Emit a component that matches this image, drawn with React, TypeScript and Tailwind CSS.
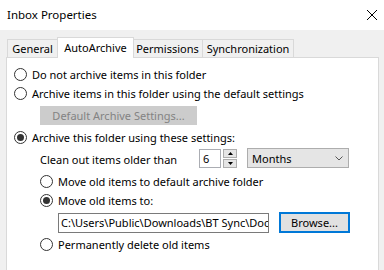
import React from "react";

const tabs = [
  { label: "General", w: "w-[51px]" },
  { label: "AutoArchive", w: "w-[77px]", active: true },
  { label: "Permissions", w: "w-[71px]" },
  { label: "Synchronization", w: "w-[92px]" },
];

function Radio({ checked = false }: { checked?: boolean }) {
  return (
    <span className="w-[13px] h-[13px] rounded-full border border-[#333] bg-white flex items-center justify-center shrink-0">
      {checked && <span className="w-[7px] h-[7px] rounded-full bg-[#333]" />}
    </span>
  );
}

function RadioRow({
  label,
  checked,
  className = "",
}: {
  label: string;
  checked?: boolean;
  className?: string;
}) {
  return (
    <div className={`h-[19px] flex items-center gap-[5px] ${className}`}>
      <Radio checked={checked} />
      <span>{label}</span>
    </div>
  );
}

export default function App() {
  return (
    <div
      className="w-[384px] h-[270px] overflow-hidden bg-[#f0f0f0] text-[11px] text-black leading-none"
      style={{ fontFamily: '"Noto Sans", "Open Sans", sans-serif' }}
    >
      {/* title bar */}
      <div className="h-[30px] bg-white flex items-center justify-between pl-[7px] pr-[7px]">
        <span className="text-[11.5px]">Inbox Properties</span>
        <svg width="10" height="10" viewBox="0 0 10 10">
          <path d="M0 0 L10 10 M10 0 L0 10" stroke="#000" strokeWidth="1" />
        </svg>
      </div>

      {/* tabs */}
      <div className="h-[27px] flex items-end pl-[7px]">
        {tabs.map((t) =>
          t.active ? (
            <div
              key={t.label}
              className={`${t.w} h-[21px] -mx-[1px] -mb-px relative z-10 bg-white border border-b-0 border-[#d9d9d9] flex items-center justify-center pb-[2px]`}
            >
              {t.label}
            </div>
          ) : (
            <div
              key={t.label}
              className={`${t.w} h-[18px] bg-[#f0f0f0] border border-b-0 border-[#d9d9d9] -ml-px first:ml-0 flex items-center justify-center`}
            >
              {t.label}
            </div>
          )
        )}
      </div>

      {/* panel */}
      <div className="ml-[6px] w-[373px] h-[230px] bg-white border border-[#d9d9d9] pt-[7px] pl-[7px]">
        <RadioRow label="Do not archive items in this folder" />
        <RadioRow label="Archive items in this folder using the default settings" />
        <div className="mt-[3px] ml-[26px] w-[157px] h-[19px] bg-[#cccccc] text-[#838383] flex items-center justify-center">
          Default Archive Settings...
        </div>
        <RadioRow label="Archive this folder using these settings:" checked className="mt-[3px]" />

        <div className="ml-[26px] mt-[1px] h-[20px] flex items-center">
          <span className="w-[159px] pt-[2px]">Clean out items older than</span>
          <div className="w-[22px] h-[19px] border border-[#abadb3] bg-white flex items-center pl-[3px]">
            6
          </div>
          <div className="ml-[2px] w-[14px] h-[19px] flex flex-col gap-px">
            <div className="flex-1 bg-[#e5e5e5] border border-[#adadad] flex items-center justify-center">
              <svg width="5" height="3" viewBox="0 0 5 3">
                <path d="M0 3 L2.5 0 L5 3 Z" fill="#000" />
              </svg>
            </div>
            <div className="flex-1 bg-[#e5e5e5] border border-[#adadad] flex items-center justify-center">
              <svg width="5" height="3" viewBox="0 0 5 3">
                <path d="M0 0 L5 0 L2.5 3 Z" fill="#000" />
              </svg>
            </div>
          </div>
          <div className="ml-[10px] w-[102px] h-[20px] bg-[#e5e5e5] border border-[#adadad] flex items-center justify-between pl-[4px] pr-[5px]">
            <span>Months</span>
            <svg width="8" height="5" viewBox="0 0 8 5">
              <path d="M0.5 0.5 L4 4 L7.5 0.5" stroke="#555" fill="none" strokeWidth="1" />
            </svg>
          </div>
        </div>

        <div className="ml-[26px]">
          <RadioRow label="Move old items to default archive folder" className="mt-[4px]" />
          <RadioRow label="Move old items to:" checked />
          <div className="mt-[2px] ml-[18px] h-[21px] flex items-center">
            <div className="w-[211px] h-[20px] border border-[#7a7a7a] bg-white flex items-center pl-[2px] overflow-hidden">
              <span className="whitespace-nowrap">C:\Users\Public\Downloads\BT Sync\Doc</span>
            </div>
            <div className="ml-[10px] w-[71px] h-[21px] bg-[#e1e1e1] border-2 border-[#0078d7] flex items-center justify-center">
              Browse...
            </div>
          </div>
          <RadioRow label="Permanently delete old items" className="mt-[2px]" />
        </div>
      </div>
    </div>
  );
}
